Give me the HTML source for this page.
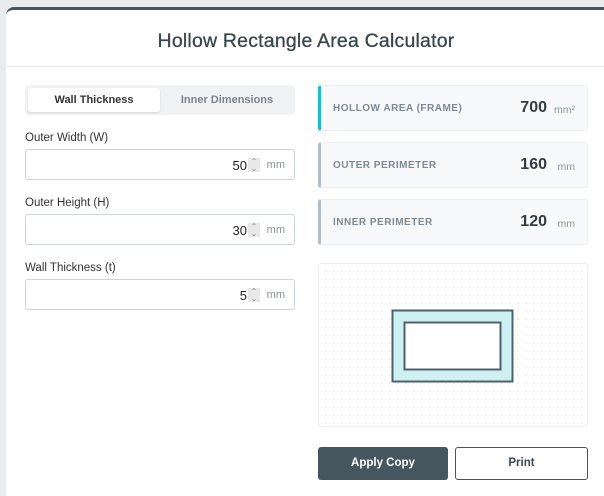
<!DOCTYPE html>
<html><head><meta charset="utf-8"><style>
*{box-sizing:border-box;margin:0;padding:0}
html,body{width:604px;height:496px;overflow:hidden}
body{background:#e9ecef;font-family:"Liberation Sans","DejaVu Sans",sans-serif;position:relative}
.card{position:absolute;left:6px;top:7px;width:620px;height:489px;background:#fff;border-top:3px solid #46555f;border-radius:8px 0 0 0}
.title{position:absolute;left:0;width:612px;top:30px;text-align:center;font-size:19.5px;color:#37454f;-webkit-text-stroke:0.3px #37454f;letter-spacing:.2px}
.hr{position:absolute;left:6px;width:600px;top:66px;height:1px;background:#e6e9ec}
.tabs{position:absolute;left:25px;top:85px;width:270px;height:30px;background:#f1f2f3;border-radius:4px}
.tab1{position:absolute;left:3px;top:3px;width:132px;height:24px;background:#fff;border-radius:3px;box-shadow:0 1px 2px rgba(0,0,0,.12);font-size:11px;font-weight:bold;color:#333;text-align:center;line-height:25px}
.tab2{position:absolute;left:137px;top:3px;width:130px;height:24px;font-size:11px;font-weight:bold;color:#7b858d;text-align:center;line-height:25px}
.lbl{position:absolute;left:25px;font-size:11.5px;color:#333}
.inp{position:absolute;left:25px;width:270px;height:31px;border:1px solid #cfd5da;border-radius:3px}
.inp .v{position:absolute;right:47px;top:8px;font-size:13px;color:#222}
.inp .sp{position:absolute;right:34px;top:8px;width:12px;height:14px;background:#e8e8e8;font-size:8px;color:#888;text-align:center;line-height:7px}
.inp .u{position:absolute;right:9px;top:9px;font-size:11px;color:#8a949b}
.res{position:absolute;left:318px;width:270px;height:46px;background:#f8f9fa;border:1px solid #eceef0;border-left:3px solid #b2bec6;border-radius:3px}
.res .k{position:absolute;left:12px;top:17px;font-size:10px;font-weight:bold;color:#7d8a94;letter-spacing:.5px}
.res .n{position:absolute;right:40px;top:13px;font-size:16px;font-weight:bold;color:#333b42}
.res .u{position:absolute;right:12px;top:18px;font-size:10.5px;color:#8a949b}
.dia{position:absolute;left:318px;top:263px;width:270px;height:164px;border:1px solid #eceef0;border-radius:4px;background-color:#fff;background-image:radial-gradient(#dfe2e4 0.7px,transparent 0.9px);background-size:8px 8px;background-position:3px 3px}
.btn{position:absolute;top:447px;height:33px;border-radius:3px;font-size:11.5px;font-weight:bold;text-align:center;line-height:33px}
</style></head><body>
<div class="card"></div>
<div class="title">Hollow Rectangle Area Calculator</div>
<div class="hr"></div>
<div class="tabs"><div class="tab1">Wall Thickness</div><div class="tab2">Inner Dimensions</div></div>
<div class="lbl" style="top:132px">Outer Width (W)</div>
<div class="inp" style="top:149px"><span class="v">50</span><span class="sp">⌃<br>⌄</span><span class="u">mm</span></div>
<div class="lbl" style="top:197px">Outer Height (H)</div>
<div class="inp" style="top:214px"><span class="v">30</span><span class="sp">⌃<br>⌄</span><span class="u">mm</span></div>
<div class="lbl" style="top:262px">Wall Thickness (t)</div>
<div class="inp" style="top:279px"><span class="v">5</span><span class="sp">⌃<br>⌄</span><span class="u">mm</span></div>
<div class="res" style="top:85px;border-left-color:#17becf"><span class="k">HOLLOW AREA (FRAME)</span><span class="n">700</span><span class="u">mm²</span></div>
<div class="res" style="top:142px"><span class="k">OUTER PERIMETER</span><span class="n">160</span><span class="u">mm</span></div>
<div class="res" style="top:199px"><span class="k">INNER PERIMETER</span><span class="n">120</span><span class="u">mm</span></div>
<div class="dia"></div>
<svg style="position:absolute;left:0;top:0" width="604" height="496"><rect x="392.5" y="310.5" width="120" height="71" fill="#cdf0f3" stroke="#4e626c" stroke-width="2"/><rect x="404.5" y="322.5" width="96" height="47" fill="#fff" stroke="#4e626c" stroke-width="2"/></svg>
<div class="btn" style="left:318px;width:130px;background:#46565f;color:#fff">Apply Copy</div>
<div class="btn" style="left:455px;width:133px;border:1px solid #46565f;color:#3a4a55;background:#fff;line-height:31px">Print</div>
</body></html>
